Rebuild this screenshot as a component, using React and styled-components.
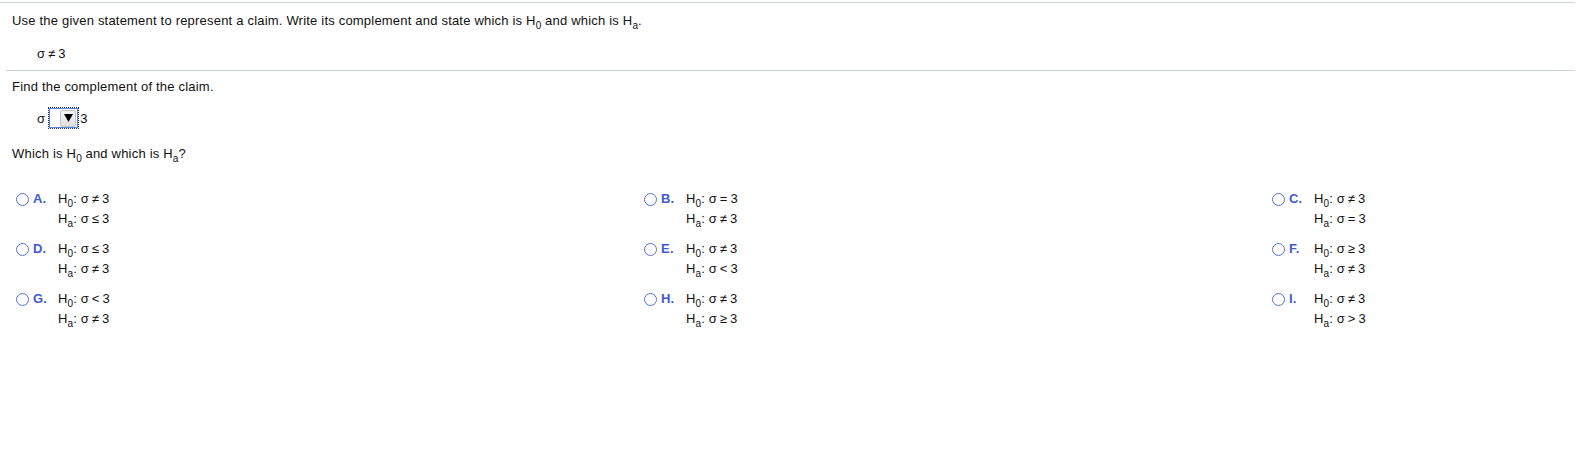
import React from "react";
import styled, { createGlobalStyle } from "styled-components";

const Global = createGlobalStyle`
  html, body { margin: 0; padding: 0; background: #fff; overflow: hidden; }
  body {
    font-family: "Liberation Sans", Arial, sans-serif;
    font-size: 13px;
    letter-spacing: 0.2px;
    color: #111;
  }
`;

const Page = styled.div`
  padding-top: 2px;
  width: 1577px;
`;

const Header = styled.div`
  border-top: 1px solid #ccd3df;
  margin-right: 2px;
  padding: 10px 0 9px 12px;
  line-height: 15px;
`;

const Claim = styled.div`
  margin-top: 18px;
  padding-left: 25px;
`;

const Divider = styled.div`
  border-top: 1px solid #ccd3df;
  margin: 0 2px 0 6px;
`;

const Body = styled.div`
  padding: 8px 0 0 12px;
  line-height: 15px;
`;

const Row = styled.div`
  display: flex;
  align-items: center;
  padding-left: 25px;
  margin-top: 13px;
  height: 22px;
`;

const Select = styled.div`
  margin: 0 1px 0 3px;
  width: 31px;
  height: 22px;
  box-sizing: border-box;
  border: 1px dotted #1d2f6a;
  box-shadow: inset 0 0 0 1px #5d85d6;
  display: flex;
  align-items: center;
  justify-content: flex-end;
  padding-right: 2px;
`;

const SelectButton = styled.div`
  width: 16px;
  height: 17px;
  box-sizing: border-box;
  border: 1px solid #c4c4c4;
  border-radius: 2px;
  background: linear-gradient(#f7f7f7, #dedede);
  display: flex;
  align-items: center;
  justify-content: center;
`;

const Question = styled.div`
  margin-top: 17px;
`;

const Sub = styled.sub`
  font-size: 10px;
  line-height: 0;
  vertical-align: -4px;
  letter-spacing: 0;
`;

const Options = styled.div`
  display: grid;
  grid-template-columns: 628px 628px 1fr;
  row-gap: 10px;
  padding-left: 16px;
  margin-top: 28px;
`;

const Option = styled.div`
  display: flex;
  align-items: flex-start;
  line-height: 20px;
`;

const Radio = styled.span`
  width: 13px;
  height: 13px;
  box-sizing: border-box;
  border: 1px solid #5574d6;
  border-radius: 50%;
  margin-top: 4px;
  flex: none;
`;

const Letter = styled.span`
  margin-left: 4px;
  width: 25px;
  font-weight: bold;
  color: #3f5bd1;
  flex: none;
`;

const Lines = styled.div`
  display: flex;
  flex-direction: column;
`;

const H = ({ s }) => (
  <>
    H<Sub>{s}</Sub>
  </>
);

const opts = [
  ["A", "σ ≠ 3", "σ ≤ 3"],
  ["B", "σ = 3", "σ ≠ 3"],
  ["C", "σ ≠ 3", "σ = 3"],
  ["D", "σ ≤ 3", "σ ≠ 3"],
  ["E", "σ ≠ 3", "σ < 3"],
  ["F", "σ ≥ 3", "σ ≠ 3"],
  ["G", "σ < 3", "σ ≠ 3"],
  ["H", "σ ≠ 3", "σ ≥ 3"],
  ["I", "σ ≠ 3", "σ > 3"],
];

const thin = (t) => t.replace(/ /g, "\u2009");

export default function App() {
  return (
    <>
      <Global />
      <Page>
        <Header>
          Use the given statement to represent a claim. Write its complement and state which is <H s="0" /> and which is <H s="a" />.
          <Claim>{thin("σ ≠ 3")}</Claim>
        </Header>
        <Divider />
        <Body>
          Find the complement of the claim.
          <Row>
            σ
            <Select>
              <SelectButton>
                <svg width="9" height="8" viewBox="0 0 9 8">
                  <polygon points="0,0 9,0 4.5,8" fill="#000" />
                </svg>
              </SelectButton>
            </Select>
            3
          </Row>
          <Question>
            Which is <H s="0" /> and which is <H s="a" />?
          </Question>
        </Body>
        <Options>
          {opts.map(([l, a, b]) => (
            <Option key={l}>
              <Radio />
              <Letter>{l}.</Letter>
              <Lines>
                <span>
                  <H s="0" />: {thin(a)}
                </span>
                <span>
                  <H s="a" />: {thin(b)}
                </span>
              </Lines>
            </Option>
          ))}
        </Options>
      </Page>
    </>
  );
}
